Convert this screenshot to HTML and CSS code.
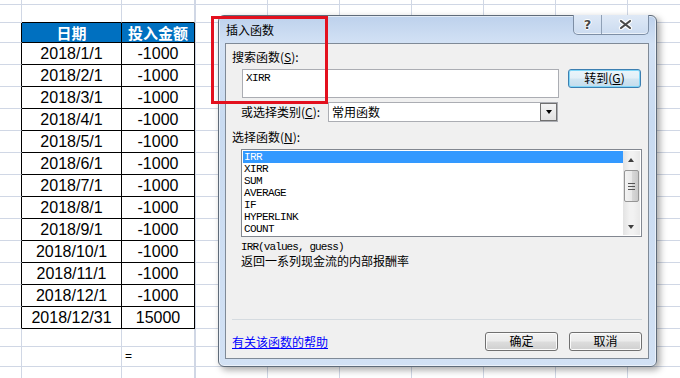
FILE: index.html
```html
<!DOCTYPE html>
<html>
	<head>
		<meta charset="UTF-8">
		<title>插入函数</title>
		<link rel="stylesheet" href="styles.css">
	</head>
	<body>
		<!--工作表-->
		<div class="sheet">
			<div class="row h5"><div class="c"></div><div class="c"></div><div class="c"></div><div class="rest"></div></div>
			<div class="row h18"><div class="c"></div><div class="c bt"></div><div class="c bt"></div><div class="rest"></div></div>
			<div class="row h20"><div class="c bl"></div><div class="c box hd">日期</div><div class="c box hd">投入金额</div><div class="rest"></div></div>
			<div class="row h22"><div class="c bl"></div><div class="c box">2018/1/1</div><div class="c box">-1000</div><div class="rest"></div></div>
			<div class="row h22"><div class="c bl"></div><div class="c box">2018/2/1</div><div class="c box">-1000</div><div class="rest"></div></div>
			<div class="row h22"><div class="c bl"></div><div class="c box">2018/3/1</div><div class="c box">-1000</div><div class="rest"></div></div>
			<div class="row h22"><div class="c bl"></div><div class="c box">2018/4/1</div><div class="c box">-1000</div><div class="rest"></div></div>
			<div class="row h22"><div class="c bl"></div><div class="c box">2018/5/1</div><div class="c box">-1000</div><div class="rest"></div></div>
			<div class="row h22"><div class="c bl"></div><div class="c box">2018/6/1</div><div class="c box">-1000</div><div class="rest"></div></div>
			<div class="row h22"><div class="c bl"></div><div class="c box">2018/7/1</div><div class="c box">-1000</div><div class="rest"></div></div>
			<div class="row h22"><div class="c bl"></div><div class="c box">2018/8/1</div><div class="c box">-1000</div><div class="rest"></div></div>
			<div class="row h22"><div class="c bl"></div><div class="c box">2018/9/1</div><div class="c box">-1000</div><div class="rest"></div></div>
			<div class="row h22"><div class="c bl"></div><div class="c box">2018/10/1</div><div class="c box">-1000</div><div class="rest"></div></div>
			<div class="row h22"><div class="c bl"></div><div class="c box">2018/11/1</div><div class="c box">-1000</div><div class="rest"></div></div>
			<div class="row h22"><div class="c bl"></div><div class="c box">2018/12/1</div><div class="c box">-1000</div><div class="rest"></div></div>
			<div class="row h22"><div class="c bl"></div><div class="c box">2018/12/31</div><div class="c box">15000</div><div class="rest"></div></div>
			<div class="row h18"><div class="c"></div><div class="c"></div><div class="c"></div><div class="rest"></div></div>
			<div class="row h18"><div class="c"></div><div class="c"></div><div class="c eq">=</div><div class="rest"></div></div>
			<div class="row h18"><div class="c"></div><div class="c"></div><div class="c"></div><div class="rest"></div></div>
		</div>

		<!--插入函数 对话框-->
		<div class="dlg">
			<div class="titlebar">
				<span class="title">插入函数</span>
				<div class="capbtns">
					<span class="cb help">?</span>
					<span class="cb close">
						<svg width="15" height="11" viewBox="0 0 15 11">
							<path d="M3 2 L12 9 M12 2 L3 9" stroke="#fff" stroke-width="4.2" stroke-linecap="round"/>
							<path d="M3 2 L12 9 M12 2 L3 9" stroke="#4a4a4a" stroke-width="2.2" stroke-linecap="round"/>
						</svg>
					</span>
				</div>
			</div>
			<div class="client">
				<div class="lbl first">搜索函数(<u>S</u>):</div>
				<div class="search">
					<div class="input">XIRR</div>
					<div class="btn def">转到(<u>G</u>)</div>
				</div>
				<div class="cat">
					<span class="lbl catlbl">或选择类别(<u>C</u>):</span>
					<div class="select"><span class="val">常用函数</span><span class="drop"></span></div>
				</div>
				<div class="lbl second">选择函数(<u>N</u>):</div>
				<div class="list">
					<ul class="items">
						<li class="sel">IRR</li>
						<li>XIRR</li>
						<li>SUM</li>
						<li>AVERAGE</li>
						<li>IF</li>
						<li>HYPERLINK</li>
						<li>COUNT</li>
					</ul>
					<div class="vscroll">
						<span class="arr up"></span>
						<span class="thumb"><i></i><i></i><i></i></span>
						<span class="arr down"></span>
					</div>
				</div>
				<div class="sig">IRR(values, guess)</div>
				<div class="desc">返回一系列现金流的内部报酬率</div>
				<div class="foot">
					<a class="helplink">有关该函数的帮助</a>
					<div class="btn">确定</div>
					<div class="btn">取消</div>
				</div>
			</div>
		</div>
		<!--红框-->
		<div class="mark"></div>
	</body>
</html>
```
FILE: styles.css
```css
body{
	margin: 0;
	width: 680px;
	height: 378px;
	overflow: hidden;
	background: #fff;
	font-family: "Liberation Sans", "Noto Sans CJK SC", sans-serif;
}
/* 工作表 */
.sheet{
	width: 680px;
}
.row{
	display: grid;
	grid-template-columns: 22px 100px 73px 1fr;
}
.h5{height: 5px;}
.h18{height: 18px;}
.h20{height: 20px;}
.h22{height: 22px;}
.c,.rest{
	box-sizing: border-box;
	border-right: 1px solid #d0d7e5;
	border-bottom: 1px solid #d0d7e5;
}
.rest{
	border-right: none;
	background: linear-gradient(to left, #d0d7e5 1px, transparent 1px) 1px 0 / 72px 100%;
}
.c.bt{
	border-bottom-color: #000;
}
.c.bl{
	border-right-color: #000;
}
.c.box{
	border-right-color: #000;
	border-bottom-color: #000;
	text-align: center;
	font-size: 16px;
	line-height: 21px;
	color: #000;
}
.c.hd{
	background: #0070c0;
	color: #fff;
	font-family: "Noto Sans CJK SC", sans-serif;
	font-weight: bold;
	font-size: 15px;
	line-height: 19px;
}
.c.eq{
	font-size: 12px;
	line-height: 19px;
	padding-left: 3px;
}
/* 对话框 */
.dlg{
	position: absolute;
	left: 218px;
	top: 15px;
	width: 439px;
	height: 352px;
	box-sizing: border-box;
	padding: 0 7px 7px 6px;
	border: 1px solid #5f6b79;
	border-radius: 6px;
	background: linear-gradient(180deg, #bdd1ec 0%, #d3e2f5 8%, #c9dbf1 30%, #d2e1f4 100%);
	box-shadow: inset 0 0 0 1px rgba(255,255,255,.55), 3px 3px 7px rgba(0,0,0,.35);
	font-family: "Noto Sans CJK SC", sans-serif;
	font-size: 12px;
	color: #000;
}
.titlebar{
	height: 27px;
	display: flex;
	align-items: center;
}
.title{
	margin-left: 1px;
	line-height: 14px;
}
.capbtns{
	margin-left: auto;
	align-self: flex-start;
	margin-top: -1px;
	display: flex;
	height: 19px;
	border: 1px solid #7d8ea5;
	border-top: none;
	border-radius: 0 0 5px 5px;
	background: linear-gradient(#dfe9f6, #cbdbf0);
	box-shadow: inset 0 -1px 0 rgba(255,255,255,.6);
}
.cb{
	display: flex;
	align-items: center;
	justify-content: center;
}
.cb.help{
	width: 27px;
	border-right: 1px solid #8fa0b6;
	font-family: "DejaVu Sans", sans-serif;
	font-weight: bold;
	font-size: 13px;
	color: #474747;
	text-shadow: 1px 0 0 #fff, -1px 0 0 #fff, 0 1px 0 #fff, 0 -1px 0 #fff;
}
.cb.close{
	width: 46px;
}
.client{
	box-sizing: border-box;
	width: 424px;
	height: 316px;
	border: 1px solid #7f8a97;
	background: #f0f0f0;
	padding: 0 6px 0 6px;
	display: flex;
	flex-direction: column;
}
.lbl{
	line-height: 14px;
}
.lbl u{
	text-decoration: underline;
}
.first{
	margin-top: 6px;
}
.search{
	margin-top: 5px;
	display: flex;
	align-items: flex-start;
}
.input{
	margin-left: 10px;
	width: 317px;
	height: 29px;
	box-sizing: border-box;
	border: 1px solid #abadb3;
	background: #fff;
	padding: 2px 0 0 3px;
	font-family: "Liberation Mono", monospace;
	font-size: 11px;
	letter-spacing: -0.6px;
	line-height: 12px;
}
.btn{
	box-sizing: border-box;
	width: 73px;
	height: 19px;
	border: 1px solid #707070;
	border-radius: 3px;
	background: linear-gradient(#f2f2f2 0%, #ebebeb 48%, #dddddd 52%, #cfcfcf 100%);
	box-shadow: inset 0 0 0 1px #fbfbfb;
	text-align: center;
	line-height: 16px;
}
.search .btn{
	margin-left: 9px;
}
.btn.def{
	border-color: #3c7fb1;
	box-shadow: inset 0 0 0 1px #7fd6f8;
	background: linear-gradient(#eaf5fb 0%, #e3eff7 48%, #d2e6f2 52%, #c4dcec 100%);
}
.cat{
	margin-top: 4px;
	display: flex;
	align-items: center;
	height: 20px;
}
.catlbl{
	margin-left: 9px;
	width: 87px;
}
.select{
	width: 230px;
	height: 20px;
	box-sizing: border-box;
	border: 1px solid #abadb3;
	background: #fff;
	display: flex;
	align-items: center;
}
.select .val{
	margin-left: 3px;
	line-height: 14px;
}
.drop{
	margin-left: auto;
	width: 17px;
	height: 18px;
	box-sizing: border-box;
	border: 1px solid #707070;
	background: linear-gradient(#f4f4f4, #e2e2e2) ;
	display: flex;
	align-items: center;
	justify-content: center;
}
.drop::after{
	content: "";
	border-left: 3.5px solid transparent;
	border-right: 3.5px solid transparent;
	border-top: 4px solid #000;
}
.second{
	margin-top: 8px;
}
.list{
	margin-top: 5px;
	margin-left: 9px;
	width: 401px;
	height: 88px;
	box-sizing: border-box;
	border: 1px solid #828790;
	background: #fff;
	display: flex;
	padding: 1px;
}
.items{
	list-style: none;
	margin: 0;
	padding: 0;
	flex: 1;
	font-family: "Liberation Mono", monospace;
	font-size: 11px;
	letter-spacing: -0.6px;
	line-height: 12px;
}
.items li{
	padding-left: 1px;
}
.items li.sel{
	background: #3399ff;
	color: #fff;
}
.vscroll{
	width: 17px;
	background: linear-gradient(to right, #e3e3e3, #f2f2f2 40%, #f2f2f2 60%, #e8e8e8);
	display: flex;
	flex-direction: column;
	align-items: center;
}
.arr{
	display: block;
	height: 17px;
	width: 17px;
	position: relative;
}
.arr::after{
	content: "";
	position: absolute;
	left: 5px;
	border-left: 3.5px solid transparent;
	border-right: 3.5px solid transparent;
}
.arr.up::after{
	top: 7px;
	border-bottom: 4px solid #404040;
}
.arr.down{
	margin-top: auto;
}
.arr.down::after{
	top: 7px;
	border-top: 4px solid #404040;
}
.thumb{
	margin-top: 2px;
	width: 15px;
	height: 32px;
	box-sizing: border-box;
	border: 1px solid #959595;
	border-radius: 2px;
	background: linear-gradient(to right, #f3f3f3, #e9e9e9 50%, #d8d8d8 55%, #c9c9c9);
	display: flex;
	flex-direction: column;
	align-items: center;
	justify-content: center;
	gap: 2px;
}
.thumb i{
	display: block;
	width: 7px;
	height: 1px;
	background: #555;
}
.sig{
	margin-top: 4px;
	margin-left: 9px;
	font-family: "Liberation Mono", monospace;
	font-size: 11px;
	letter-spacing: -0.9px;
	line-height: 13px;
}
.desc{
	margin-left: 9px;
	line-height: 14px;
}
.foot{
	margin-top: auto;
	border-top: 1px solid #d5dbe0;
	padding: 12px 0 7px 0;
	display: flex;
	align-items: center;
	gap: 11px;
}
.helplink{
	margin-right: auto;
	color: #0000ff;
	text-decoration: underline;
	line-height: 14px;
}
/* 红框 */
.mark{
	position: absolute;
	left: 211px;
	top: 16px;
	width: 117px;
	height: 88px;
	box-sizing: border-box;
	border: 3px solid #e3101e;
}
```
